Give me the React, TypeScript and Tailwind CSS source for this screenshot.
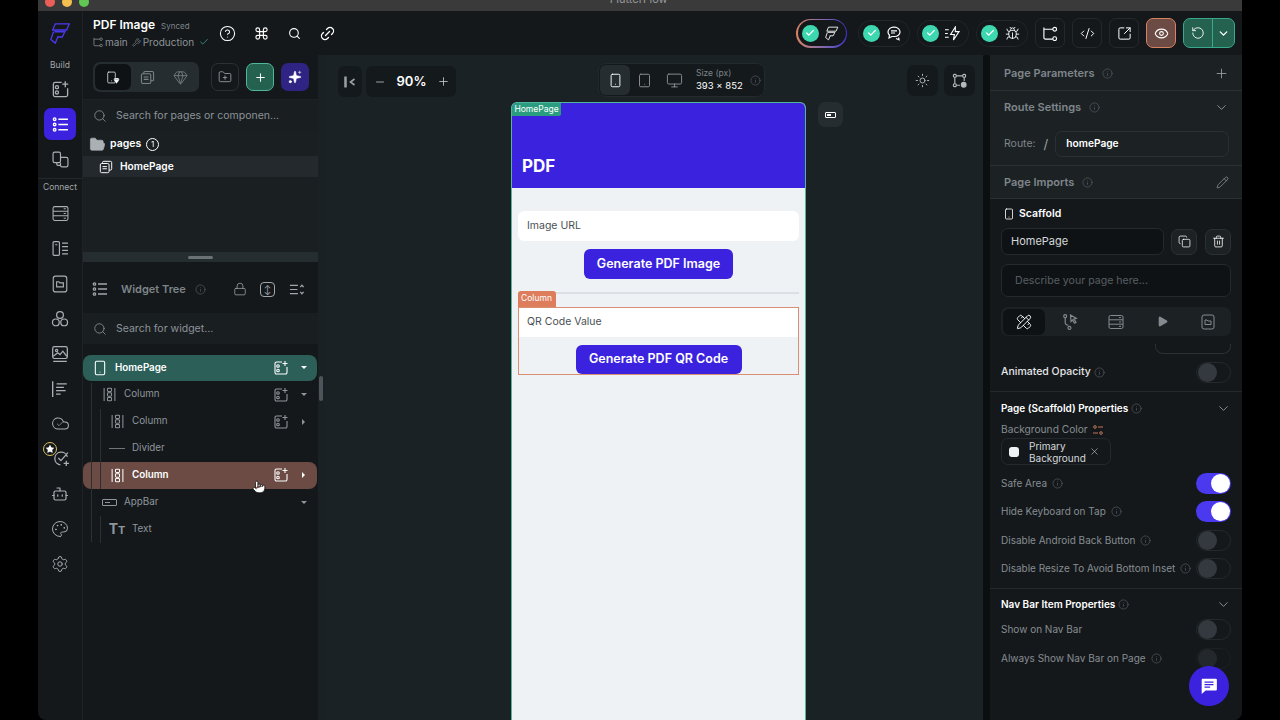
import {
  Bot,
  Bug,
  ChevronDown,
  CircleHelp,
  Cloud,
  CodeXml,
  Command,
  Copy,
  Eye,
  FolderOpen,
  FolderPlus,
  Gem,
  Info,
  Link2,
  Lock,
  Minus,
  Monitor,
  Palette,
  PencilRuler,
  Pencil,
  Play,
  Plus,
  Pointer,
  RotateCcw,
  Search,
  Settings,
  Smartphone,
  Sparkles,
  Star,
  Sun,
  Tablet,
  Trash2,
  Wrench,
  X,
  Check,
  SquareArrowOutUpRight,
} from "lucide-react";
import type { ReactNode } from "react";

const font = "font-['Inter',_sans-serif]";

function AddWidgetIcon({ className = "" }: { className?: string }) {
  return (
    <svg viewBox="0 0 16 16" fill="none" stroke="currentColor" strokeWidth="1.1" className={className}>
      <path d="M9 2H3.5A1.5 1.5 0 0 0 2 3.5v9A1.5 1.5 0 0 0 3.5 14h9a1.5 1.5 0 0 0 1.5-1.5V7" />
      <circle cx="5" cy="6" r="1.3" />
      <circle cx="5" cy="10.5" r="1.3" />
      <path d="M12 1v5M9.5 3.5h5" />
    </svg>
  );
}

function ColumnIcon({ className = "" }: { className?: string }) {
  return (
    <svg viewBox="0 0 14 16" fill="none" stroke="currentColor" strokeWidth="1.1" className={className}>
      <path d="M1.2 1v14M12.8 1v14" />
      <rect x="4.8" y="1.2" width="4.4" height="3.6" rx="1" />
      <rect x="4.8" y="6.2" width="4.4" height="3.6" rx="1" />
      <rect x="4.8" y="11.2" width="4.4" height="3.6" rx="1" />
    </svg>
  );
}

function ListDotsIcon({ className = "" }: { className?: string }) {
  return (
    <svg viewBox="0 0 16 16" fill="none" stroke="currentColor" strokeWidth="1.3" className={className}>
      <circle cx="2.5" cy="3" r="1.2" />
      <circle cx="2.5" cy="8" r="1.2" />
      <circle cx="2.5" cy="13" r="1.2" />
      <path d="M6 3h9M6 8h9M6 13h9" />
    </svg>
  );
}

function ServerIcon({ className = "" }: { className?: string }) {
  return (
    <svg viewBox="0 0 16 16" fill="none" stroke="currentColor" strokeWidth="1" className={className}>
      <rect x="1" y="1.5" width="14" height="13" rx="1.5" />
      <path d="M1 5.8h14M1 10.2h14M11 3.6h2M11 8h2M11 12.4h2" />
    </svg>
  );
}

function FolderDocIcon({ className = "" }: { className?: string }) {
  return (
    <svg viewBox="0 0 16 16" fill="none" stroke="currentColor" strokeWidth="1" className={className}>
      <rect x="2" y="1" width="12" height="14" rx="2" />
      <path d="M5 6h2l1 1h3v3.5H5z" />
    </svg>
  );
}

function PagesIcon({ className = "" }: { className?: string }) {
  return (
    <svg viewBox="0 0 16 16" fill="none" stroke="currentColor" strokeWidth="1.1" className={className}>
      <rect x="1.5" y="4" width="10" height="10.5" rx="1.6" />
      <path d="M4 4V3a1.5 1.5 0 0 1 1.5-1.5H13A1.5 1.5 0 0 1 14.5 3v7a1.5 1.5 0 0 1-1.5 1.5h-1.5M4 7.5h5M4 10h5" />
    </svg>
  );
}

function Logo({ className = "w-[21px] h-[25px]", color = "#4b39ef" }: { className?: string; color?: string }) {
  return (
    <svg viewBox="0 0 24 26" fill="none" stroke={color} strokeWidth="1.5" className={className}>
      <path d="M6 2h16l-3 7H3z" />
      <path d="M5 11h12l-3 6H8" />
      <path d="M4 11L1 20l5 4 3-7" />
    </svg>
  );
}

function FlowIcon({ className = "" }: { className?: string }) {
  return (
    <svg viewBox="0 0 16 16" fill="none" stroke="currentColor" strokeWidth="1.1" className={className}>
      <circle cx="3" cy="3" r="1.4" />
      <circle cx="7" cy="14" r="1.4" />
      <path d="M3 4.5v4a3 3 0 0 0 3 3M8 2l5.5 3-2.3.8 2 3-1.5.8-1.7-3L8.5 8z" />
    </svg>
  );
}

function ChatsIcon({ className = "" }: { className?: string }) {
  return (
    <svg viewBox="0 0 16 16" fill="none" stroke="currentColor" strokeWidth="1.2" className={className}>
      <path d="M2 7a5.5 4.8 0 0 1 5.5-4.8h1A5.5 4.8 0 0 1 14 7a5.5 4.5 0 0 1-5.5 4.5H6L3 13l.5-2.7A4.6 4.6 0 0 1 2 7z" />
      <path d="M5 5.8h6M5 8h4M10 13.5l3 1.2-.4-2.2" />
    </svg>
  );
}

function FastIcon({ className = "" }: { className?: string }) {
  return (
    <svg viewBox="0 0 18 16" fill="none" stroke="currentColor" strokeWidth="1.2" className={className}>
      <path d="M1 4h4M1 8h3M1 12h4M12 1L7 9h4l-1 6 6-9h-4z" />
    </svg>
  );
}

function BranchBoxIcon({ className = "" }: { className?: string }) {
  return (
    <svg viewBox="0 0 16 16" fill="none" stroke="currentColor" strokeWidth="1.2" className={className}>
      <path d="M1.5 1.5v11a1.500 1.500 0 0 0 1.500 1.500h8M1.500 3.500H11" />
      <circle cx="13" cy="3.500" r="2" />
      <circle cx="13" cy="13.500" r="2" />
    </svg>
  );
}

function InfoDot({ className = "" }: { className?: string }) {
  return <Info strokeWidth={1.3} className={`w-[11px] h-[11px] text-[#5f666b] shrink-0 ${className}`} />;
}

function RailIcon({ children }: { children: ReactNode }) {
  return <div className="h-[35px] w-full flex items-center justify-center text-[#aab0b4]">{children}</div>;
}

function CheckPill({ children, gradient }: { children: ReactNode; gradient?: boolean }) {
  return (
    <div
      className={
        gradient
          ? "h-[29px] w-[51px] rounded-full p-[1.5px] bg-gradient-to-r from-[#d9825f] to-[#4531d8]"
          : "h-[27px] w-[52px] rounded-full border border-[#23292c]"
      }
    >
      <div className="h-full w-full rounded-full bg-[#14181b] flex items-center justify-between pl-[4px] pr-[7px] text-white">
        <div className="w-[17px] h-[17px] rounded-full bg-[#3ed8b0] flex items-center justify-center">
          <Check strokeWidth={3} className="w-[10px] h-[10px] text-white" />
        </div>
        {children}
      </div>
    </div>
  );
}

function SquareBtn({ children }: { children: ReactNode }) {
  return (
    <div className="w-[30px] h-[30px] rounded-[7px] border border-[#23292c] flex items-center justify-center text-white">
      {children}
    </div>
  );
}

function TreeRow({
  label,
  icon,
  indent,
  tone,
  add = true,
  caret,
}: {
  label: string;
  icon: ReactNode;
  indent: string;
  tone?: "green" | "brown";
  add?: boolean;
  caret?: "down" | "right";
}) {
  const bg = tone === "green" ? "bg-[#2b5f58]" : tone === "brown" ? "bg-[#6b4b43]" : "";
  const text = tone ? "text-white font-semibold" : "text-[#8f969b]";
  return (
    <div className={`h-[26.83px] w-[234px] flex items-center rounded-[8px] ${bg} ${tone ? "text-white" : "text-[#8f969b]"}`}>
      <div className={`flex items-center ${indent}`}>
        <div className="w-[16px] h-[16px] flex items-center justify-center">{icon}</div>
      </div>
      <span className={`ml-[7px] text-[9.8px] ${text}`}>{label}</span>
      <div className="ml-auto flex items-center">
        {add && <AddWidgetIcon className="w-[16px] h-[16px]" />}
        <div className="w-[9px] h-[9px] ml-[10px] mr-[9px] flex items-center justify-center">
          {caret === "down" && <div className="border-x-[3px] border-x-transparent border-t-[3px] border-t-current" />}
          {caret === "right" && <div className="border-y-[3px] border-y-transparent border-l-[3px] border-l-current" />}
        </div>
      </div>
    </div>
  );
}

function Toggle({ on, dim }: { on?: boolean; dim?: boolean }) {
  if (on) {
    return (
      <div className="w-[35px] h-[21px] rounded-full bg-[#4b39ef] flex items-center justify-end pr-[1px]">
        <div className="w-[19px] h-[19px] rounded-full bg-white" />
      </div>
    );
  }
  return (
    <div className={`w-[35px] h-[21px] rounded-full border border-[#23292c] flex items-center pl-[1px] ${dim ? "opacity-50" : ""}`}>
      <div className="w-[19px] h-[19px] rounded-full bg-[#33393e]" />
    </div>
  );
}

function PropRow({ label, toggle, h = "h-[28.5px]" }: { label: string; toggle: ReactNode; h?: string }) {
  return (
    <div className={`${h} flex items-center justify-between pl-[11px] pr-[11px]`}>
      <div className="flex items-center gap-[5px] text-[10px] whitespace-nowrap text-[#878d92]">
        {label}
        <InfoDot />
      </div>
      {toggle}
    </div>
  );
}

export default function App() {
  return (
    <div className={`h-screen w-full bg-black flex justify-center overflow-hidden ${font}`}>
      <div className="relative w-[1204px] h-[720px] flex flex-col bg-[#14181b] overflow-hidden rounded-b-[8px]">
        {/* TITLE BAR */}
        <div className="h-[11px] shrink-0 bg-[#3a3a3a] flex items-start pl-[6.5px] gap-[7px] relative overflow-hidden">
          <div className="w-[10px] h-[10px] rounded-full bg-[#ec5f57] -mt-[3px]" />
          <div className="w-[10px] h-[10px] rounded-full bg-[#f4bf4f] -mt-[3px]" />
          <div className="w-[10px] h-[10px] rounded-full bg-[#62c654] -mt-[3px]" />
          <div className="flex-1 text-center text-[11px] leading-[11px] text-[#9a9a9a] -mt-[6px] -ml-[60px]">FlutterFlow</div>
        </div>

        {/* TOP BAR */}
        <div className="h-[44px] shrink-0 flex items-center">
          <div className="w-[45px] h-full flex items-center justify-center border-r border-[#1e2326]">
            <Logo />
          </div>
          <div className="ml-[10px] w-[126px]">
            <div className="flex items-baseline gap-[6px]">
              <span className="text-[12px] font-semibold text-white leading-[16px]">PDF Image</span>
              <span className="text-[8px] text-[#7f868b]">Synced</span>
            </div>
            <div className="flex items-center text-[10px] text-[#8d9398] leading-[14px] mt-[2px]">
              <BranchBoxIcon className="w-[10px] h-[10px] mr-[2px]" />
              main
              <Wrench strokeWidth={1.5} className="w-[9px] h-[9px] ml-[4px] mr-[2px]" />
              Production
              <Check strokeWidth={2} className="w-[10px] h-[10px] ml-[5px] text-[#3a9c85]" />
            </div>
          </div>
          <div className="flex items-center text-white">
            <CircleHelp strokeWidth={1.5} className="w-[17px] h-[17px]" />
            <Command strokeWidth={1.8} className="w-[15px] h-[15px] ml-[18px]" />
            <Search strokeWidth={2} className="w-[13px] h-[13px] ml-[19px]" />
            <Link2 strokeWidth={1.8} className="w-[17px] h-[17px] ml-[18px] -rotate-45" />
          </div>
          <div className="ml-auto mr-[7px] flex items-center">
            <CheckPill gradient>
              <Logo className="w-[14px] h-[15px]" color="white" />
            </CheckPill>
            <div className="w-[11px]" />
            <CheckPill>
              <ChatsIcon className="w-[16px] h-[16px]" />
            </CheckPill>
            <div className="w-[7px]" />
            <CheckPill>
              <FastIcon className="w-[17px] h-[15px]" />
            </CheckPill>
            <div className="w-[7px]" />
            <CheckPill>
              <Bug strokeWidth={1.4} className="w-[15px] h-[15px]" />
            </CheckPill>
            <div className="w-[7px]" />
            <SquareBtn>
              <BranchBoxIcon className="w-[16px] h-[15px]" />
            </SquareBtn>
            <div className="w-[7px]" />
            <SquareBtn>
              <CodeXml strokeWidth={1.6} className="w-[15px] h-[15px]" />
            </SquareBtn>
            <div className="w-[7px]" />
            <SquareBtn>
              <SquareArrowOutUpRight strokeWidth={1.6} className="w-[15px] h-[15px]" />
            </SquareBtn>
            <div className="w-[7px]" />
            <div className="w-[30px] h-[30px] rounded-[7px] border border-[#d9825f] bg-[#6b4b43] flex items-center justify-center text-white">
              <Eye strokeWidth={1.7} className="w-[15px] h-[15px]" />
            </div>
            <div className="w-[7px]" />
            <div className="w-[52px] h-[30px] rounded-[7px] border border-[#39a98e] bg-[#25614f] flex items-center text-white">
              <div className="w-[29px] h-full flex items-center justify-center border-r border-[#39a98e]">
                <RotateCcw strokeWidth={1.5} className="w-[14px] h-[14px]" />
              </div>
              <div className="flex-1 flex items-center justify-center">
                <ChevronDown strokeWidth={2.5} className="w-[13px] h-[13px]" />
              </div>
            </div>
          </div>
        </div>

        {/* BODY */}
        <div className="flex-1 flex min-h-0">
          {/* RAIL */}
          <div className="w-[45px] shrink-0 flex flex-col items-center border-r border-[#1e2326] relative">
            <div className="h-[20px] flex items-center text-[8.5px] text-[#a0a6aa]">Build</div>
            <div className="h-[28px] w-full flex items-center justify-center text-[#aab0b4]">
              <AddWidgetIcon className="w-[19px] h-[19px]" />
            </div>
            <div className="mt-[5px] w-[32px] h-[32px] rounded-[7px] bg-[#3b22df] flex items-center justify-center text-white">
              <ListDotsIcon className="w-[17px] h-[17px]" />
            </div>
            <div className="h-[38px] w-full flex items-center justify-center text-[#aab0b4]">
              <svg viewBox="0 0 16 16" fill="none" stroke="currentColor" strokeWidth="1.1" className="w-[17px] h-[17px]">
                <rect x="1" y="1" width="7" height="10" rx="1.5" />
                <path d="M8 6h5.5A1.5 1.5 0 0 1 15 7.5v6a1.5 1.5 0 0 1-1.5 1.5h-4A1.5 1.5 0 0 1 8 13.5V11M4.5 11v1.5a1 1 0 0 0 1 1H8" />
              </svg>
            </div>
            <div className="w-full border-t border-[#22282b] h-[18px] flex items-center justify-center text-[8.5px] text-[#a0a6aa]">
              Connect
            </div>
            <div className="w-full">
              <RailIcon>
                <ServerIcon className="w-[17px] h-[17px]" />
              </RailIcon>
              <RailIcon>
                <svg viewBox="0 0 16 16" fill="none" stroke="currentColor" strokeWidth="1.1" className="w-[17px] h-[17px]">
                  <rect x="1" y="1.5" width="6" height="13" rx="1" />
                  <path d="M9.5 3h5.5M9.5 6.3h5.5M9.5 9.7h5.5M9.5 13h5.5M3 4.5h2" />
                </svg>
              </RailIcon>
              <RailIcon>
                <FolderDocIcon className="w-[18px] h-[18px]" />
              </RailIcon>
              <RailIcon>
                <svg viewBox="0 0 16 16" fill="none" stroke="currentColor" strokeWidth="1.1" className="w-[18px] h-[18px]">
                  <circle cx="8" cy="4.5" r="3" />
                  <circle cx="4.3" cy="11" r="3" />
                  <circle cx="11.7" cy="11" r="3" />
                </svg>
              </RailIcon>
              <RailIcon>
                <svg viewBox="0 0 16 16" fill="none" stroke="currentColor" strokeWidth="1.1" className="w-[18px] h-[18px]">
                  <rect x="1.5" y="1.5" width="13" height="10.5" rx="1.5" />
                  <circle cx="5" cy="4.8" r="1" />
                  <path d="M2 10l4-3 2 1.5L10.5 5.500 14 10M2 14.5h12" />
                </svg>
              </RailIcon>
              <RailIcon>
                <svg viewBox="0 0 16 16" fill="none" stroke="currentColor" strokeWidth="1.2" className="w-[18px] h-[18px]">
                  <path d="M1.5 1v14M5 3.5h9M4.5 6.5h7M4.500 9.5h8.5M4.5 12.5h4" />
                </svg>
              </RailIcon>
              <RailIcon>
                <div className="relative flex items-center justify-center">
                  <Cloud strokeWidth={1.3} className="w-[19px] h-[19px]" />
                  <Check strokeWidth={2} className="absolute w-[8px] h-[8px] top-[6px]" />
                </div>
              </RailIcon>
              <RailIcon>
                <svg viewBox="0 0 16 16" fill="none" stroke="currentColor" strokeWidth="1.2" className="w-[17px] h-[17px] ml-[3px]">
                  <path d="M13.5 6.5A6 6 0 1 0 7 14M5 7.5l2.5 2.5L14 2.5M12.5 10v5M10 12.5h5" />
                </svg>
              </RailIcon>
              <RailIcon>
                <Bot strokeWidth={1.6} className="w-[18px] h-[18px]" />
              </RailIcon>
              <RailIcon>
                <Palette strokeWidth={1.3} className="w-[18px] h-[18px]" />
              </RailIcon>
              <RailIcon>
                <Settings strokeWidth={1.3} className="w-[18px] h-[18px]" />
              </RailIcon>
            </div>
            <div className="absolute left-[5px] top-[387px] w-[14px] h-[14px] rounded-full border border-[#d9c25f] bg-[#14181b] flex items-center justify-center">
              <Star fill="white" strokeWidth={0} className="w-[10px] h-[10px]" />
            </div>
          </div>

          {/* LEFT PANEL */}
          <div className="w-[235px] shrink-0 flex flex-col bg-[#14181b]">
            <div className="h-[45px] flex items-center pl-[10px] border-b border-[#1d2225]">
              <div className="w-[106px] h-[30px] rounded-[7px] bg-[#262d31] flex items-center p-[2px]">
                <div className="w-[36px] h-[26px] rounded-[6px] bg-[#0f1214] flex items-center justify-center text-white relative">
                  <Smartphone strokeWidth={1.3} className="w-[13px] h-[13px] -ml-[3px]" />
                  <Gem fill="white" strokeWidth={1} className="w-[7px] h-[7px] absolute right-[11px] bottom-[6px] text-[#0f1214]" />
                </div>
                <div className="w-[33px] flex justify-center text-[#7d8488]">
                  <PagesIcon className="w-[15px] h-[15px]" />
                </div>
                <div className="w-[33px] flex justify-center text-[#7d8488]">
                  <Gem strokeWidth={1.3} className="w-[15px] h-[15px]" />
                </div>
              </div>
              <div className="ml-[12px] w-[28px] h-[28px] rounded-[7px] border border-[#2a3034] flex items-center justify-center text-[#aab0b4]">
                <FolderPlus strokeWidth={1.3} className="w-[14px] h-[14px]" />
              </div>
              <div className="ml-[7px] w-[28px] h-[28px] rounded-[7px] border border-[#4fb79c] bg-[#25614f] flex items-center justify-center text-white">
                <Plus strokeWidth={2} className="w-[13px] h-[13px]" />
              </div>
              <div className="ml-[7px] w-[28px] h-[28px] rounded-[7px] bg-[#2f2483] flex items-center justify-center text-white">
                <Sparkles fill="white" strokeWidth={1} className="w-[14px] h-[14px]" />
              </div>
            </div>
            <div className="h-[31px] flex items-center pl-[10px] gap-[9px] bg-[#191e21] text-[#8d9398] text-[10.5px]">
              <Search strokeWidth={1.4} className="w-[14px] h-[14px]" />
              <span>Search for pages or componen...</span>
            </div>
            <div className="flex-none h-[121px] bg-[#1a1f22]">
              <div className="h-[24px] flex items-center pl-[6px] mt-[1px] text-white">
                <FolderOpen fill="#aab0b4" strokeWidth={1} className="w-[17px] h-[17px] text-[#aab0b4]" />
                <span className="ml-[4px] text-[10.5px] font-semibold">pages</span>
                <span className="ml-[5px] w-[13px] h-[13px] rounded-full border border-white flex items-center justify-center text-[8px]">1</span>
              </div>
              <div className="h-[21px] bg-[#23292d] flex items-center pl-[16px] text-white">
                <PagesIcon className="w-[14px] h-[14px]" />
                <span className="ml-[7px] text-[10.2px] font-semibold">HomePage</span>
              </div>
            </div>
            <div className="h-[10px] bg-[#262d31] flex items-center justify-center">
              <div className="w-[25px] h-[3px] rounded-full bg-[#6b7276]" />
            </div>
            <div className="h-[51px] flex items-center pl-[9px] pt-[3px] text-[#a0a6aa]">
              <ListDotsIcon className="w-[16px] h-[16px]" />
              <span className="ml-[13px] text-[11px] font-semibold text-[#7d8488]">Widget Tree</span>
              <InfoDot className="ml-[9px]" />
              <div className="ml-auto flex items-center gap-[13px] mr-[13px]">
                <Lock strokeWidth={1.3} className="w-[14px] h-[14px]" />
                <div className="w-[15px] h-[15px] rounded-[4px] border border-[#a0a6aa] flex items-center justify-center text-[9px] leading-none">↕</div>
                <svg viewBox="0 0 16 16" fill="none" stroke="currentColor" strokeWidth="1.3" className="w-[17px] h-[15px]">
                  <path d="M1 3.5h8.5M1 8h8M1 12.5h8.5M12 5.5l1.8-2 1.8 2M12 10.5l1.8 2 1.8-2" />
                </svg>
              </div>
            </div>
            <div className="h-[31px] flex items-center pl-[10px] gap-[9px] bg-[#191e21] text-[#8d9398] text-[10.5px]">
              <Search strokeWidth={1.4} className="w-[14px] h-[14px]" />
              <span>Search for widget...</span>
            </div>
            <div className="relative mt-[10.5px]">
              <TreeRow
                label="HomePage"
                tone="green"
                indent="pl-[9px]"
                caret="down"
                icon={<Smartphone strokeWidth={1.6} className="w-[16px] h-[16px]" />}
              />
              <TreeRow label="Column" indent="pl-[18px]" caret="down" icon={<ColumnIcon className="w-[13px] h-[15px]" />} />
              <TreeRow label="Column" indent="pl-[26px]" caret="right" icon={<ColumnIcon className="w-[13px] h-[15px]" />} />
              <TreeRow
                label="Divider"
                indent="pl-[26px]"
                add={false}
                icon={<div className="w-[16px] h-[1.5px] bg-[#6f767a]" />}
              />
              <TreeRow
                label="Column"
                tone="brown"
                indent="pl-[26px]"
                caret="right"
                icon={<ColumnIcon className="w-[13px] h-[15px]" />}
              />
              <TreeRow
                label="AppBar"
                indent="pl-[18px]"
                add={false}
                caret="down"
                icon={
                  <div className="w-[15px] h-[7px] border border-[#8f969b] rounded-[1px] flex items-center pl-[2px]">
                    <div className="w-[5px] h-[1px] bg-[#8f969b]" />
                  </div>
                }
              />
              <TreeRow
                label="Text"
                indent="pl-[26px]"
                add={false}
                icon={<span className="text-[14px] font-bold leading-none">T<span className="text-[11px]">T</span></span>}
              />
              <div className="absolute left-[8px] top-[28px] bottom-[0px] w-px bg-[#2a3034]" />
              <div className="absolute left-[17px] top-[54px] h-[80px] w-px bg-[#2a3034]" />
              <div className="absolute left-[17px] top-[161px] h-[27px] w-px bg-[#2a3034]" />
              <div className="absolute left-[169px] top-[124px]">
                <Pointer fill="white" strokeWidth={1.2} className="w-[14px] h-[16px] text-black" />
              </div>
            </div>
          </div>

          {/* LEFT SCROLLBAR */}
          <div className="w-[7px] shrink-0 bg-[#1a2124] pt-[321px] pl-[1px]">
            <div className="w-[4px] h-[25px] rounded-full bg-[#4e555a]" />
          </div>

          {/* CANVAS */}
          <div className="w-[658px] shrink-0 bg-[#1a2225] relative flex flex-col items-center overflow-hidden">
            <div className="absolute left-[13px] top-[11px] w-[24px] h-[31px] rounded-[6px] bg-[#14191c] flex items-center justify-center text-[#9aa0a4]">
              <svg viewBox="0 0 14 14" fill="none" stroke="currentColor" className="w-[14px] h-[14px]">
                <path d="M2.5 1.5v11" strokeWidth="2.5" />
                <path d="M11.5 4L7.5 7l4 3" strokeWidth="1.6" />
              </svg>
            </div>
            <div className="absolute left-[41px] top-[11px] w-[90px] h-[31px] rounded-[6px] bg-[#14191c] flex items-center justify-between pl-[8px] pr-[6px] text-white">
              <Minus strokeWidth={1.6} className="w-[12px] h-[12px] text-[#c0c4c7]" />
              <span className="text-[13px] font-semibold">90%</span>
              <Plus strokeWidth={1.6} className="w-[13px] h-[13px] text-[#c0c4c7]" />
            </div>
            <div className="absolute left-[273px] top-[8px] w-[167px] h-[34px] rounded-[8px] border border-[#23292c] bg-[#14191c] flex items-center pl-[1px] text-[#8d9398]">
              <div className="w-[30px] h-[30px] rounded-[6px] bg-[#262d31] flex items-center justify-center text-white">
                <Smartphone strokeWidth={1.5} className="w-[15px] h-[15px]" />
              </div>
              <Tablet strokeWidth={1.5} className="w-[15px] h-[15px] ml-[7px]" />
              <Monitor strokeWidth={1.3} className="w-[17px] h-[17px] ml-[14px]" />
              <div className="ml-[13px] flex flex-col">
                <span className="text-[8.5px] leading-[12px] text-[#7d8488]">Size (px)</span>
                <span className="text-[9.5px] leading-[14px] text-white">393 × 852</span>
              </div>
              <InfoDot className="ml-[7px]" />
            </div>
            <div className="absolute right-[45px] top-[10px] w-[31px] h-[31px] rounded-[7px] bg-[#14191c] flex items-center justify-center text-[#b5babd]">
              <Sun strokeWidth={1.5} className="w-[15px] h-[15px]" />
            </div>
            <div className="absolute right-[8px] top-[10px] w-[31px] h-[31px] rounded-[7px] bg-[#14191c] flex items-center justify-center text-[#b5babd]">
              <svg viewBox="0 0 16 16" fill="none" stroke="currentColor" strokeWidth="1.2" className="w-[15px] h-[15px]">
                <rect x="1.5" y="1.5" width="3" height="3" rx="1" />
                <rect x="11.5" y="1.5" width="3" height="3" rx="1" />
                <rect x="1.5" y="11.5" width="3" height="3" rx="1" />
                <path d="M4.5 3h7M3 4.5v7M4.5 13h4M13 4.5v4" />
                <circle cx="12.5" cy="12.5" r="2.5" fill="currentColor" />
              </svg>
            </div>
            <div className="absolute left-[493px] top-[47px] w-[25px] h-[25px] rounded-[7px] bg-[#262d31] flex items-center justify-center">
              <div className="w-[11px] h-[6px] rounded-[1px] border border-white flex items-center pl-[1px]">
                <div className="w-[4px] h-[2px] bg-white" />
              </div>
            </div>

            {/* DEVICE */}
            <div className="mt-[47px] ml-[9px] w-[295px] flex-1 rounded-t-[6px] border border-b-0 border-[#4fb79c] bg-[#eff2f5] relative">
              <div className="absolute left-0 top-0 h-[13px] w-[49px] bg-[#2a9d80] rounded-tl-[5px] rounded-br-[2px] flex items-center justify-center text-[8.5px] text-white">
                HomePage
              </div>
              <div className="h-[85px] bg-[#3b22df] rounded-t-[5px] flex items-end pl-[10px] pb-[10px]">
                <span className="text-[17px] leading-[24px] font-bold text-white">PDF</span>
              </div>
              <div className="px-[6px] pt-[23px] flex flex-col">
                <div className="h-[30px] rounded-[6px] bg-white flex items-center pl-[9px] text-[10.5px] text-[#4a4f54]">Image URL</div>
                <div className="mt-[8px] self-center w-[149px] h-[30px] pt-[1px] rounded-[6px] bg-[#3b22df] flex items-center justify-center text-[12.5px] font-semibold text-white">
                  Generate PDF Image
                </div>
                <div className="mt-[13px] h-[1.5px] bg-[#dce0e4]" />
                <div className="relative mt-[13px] h-[68px] border-[1.5px] border-[#d98f72] flex flex-col">
                  <div className="absolute -left-[1.5px] -top-[17px] h-[16px] w-[38px] rounded-t-[3px] bg-[#dd7d5b] flex items-center justify-center text-[8.5px] text-white">
                    Column
                  </div>
                  <div className="h-[29px] bg-white flex items-center pl-[8px] text-[10.5px] text-[#4a4f54]">QR Code Value</div>
                  <div className="mt-[8px] self-center w-[166px] h-[29px] pt-[1px] rounded-[6px] bg-[#3b22df] flex items-center justify-center text-[12.5px] font-semibold text-white">
                    Generate PDF QR Code
                  </div>
                </div>
              </div>
            </div>
          </div>

          {/* RIGHT SCROLLBAR */}
          <div className="w-[7px] shrink-0 bg-[#0c0f10] rounded-t-[3px]" />

          {/* RIGHT PANEL */}
          <div className="flex-1 min-w-0 flex flex-col relative">
            <div className="bg-[#1c2124]">
              <div className="h-[36px] pt-[1px] flex items-center justify-between pl-[14px] pr-[13px] border-b border-[#2a3034]">
                <div className="flex items-center gap-[8px] text-[11px] font-semibold text-[#7f868b]">
                  Page Parameters
                  <InfoDot />
                </div>
                <Plus strokeWidth={1.3} className="w-[15px] h-[15px] text-[#a0a6aa]" />
              </div>
              <div className="h-[33px] flex items-center justify-between pl-[14px] pr-[13px]">
                <div className="flex items-center gap-[8px] text-[11px] font-semibold text-[#7f868b]">
                  Route Settings
                  <InfoDot />
                </div>
                <ChevronDown strokeWidth={1.3} className="w-[15px] h-[15px] text-[#a0a6aa]" />
              </div>
              <div className="h-[42px] pt-[7px] flex items-start pl-[14px] pr-[13px] border-b border-[#2a3034]">
                <span className="text-[10.5px] leading-[26px] text-[#7f868b]">Route:</span>
                <span className="ml-[8px] text-[13px] leading-[26px] text-[#9aa0a4]">/</span>
                <div className="ml-[7px] flex-1 h-[26px] rounded-[7px] border border-[#2a3034] flex items-center pl-[10px] text-[10.2px] font-semibold text-white">
                  homePage
                </div>
              </div>
              <div className="h-[33px] flex items-center justify-between pl-[14px] pr-[13px] border-b border-[#2a3034]">
                <div className="flex items-center gap-[8px] text-[11px] font-semibold text-[#7f868b]">
                  Page Imports
                  <InfoDot />
                </div>
                <Pencil strokeWidth={1.2} className="w-[13px] h-[13px] text-[#a0a6aa]" />
              </div>
            </div>
            <div className="flex-1 bg-[#14181b] flex flex-col">
              <div className="h-[29px] pt-[1px] flex items-center pl-[13px] text-white">
                <Smartphone strokeWidth={1.6} className="w-[12px] h-[12px]" />
                <span className="ml-[4px] text-[10.5px] font-semibold">Scaffold</span>
              </div>
              <div className="flex items-center pl-[11px] pr-[11px]">
                <div className="w-[163px] h-[27px] rounded-[7px] border border-[#23292c] bg-[#0f1214] flex items-center pl-[9px] text-[11px] text-[#d5d8da]">
                  HomePage
                </div>
                <div className="ml-[7px] w-[26px] h-[26px] rounded-[7px] border border-[#2a3034] bg-[#1c2124] flex items-center justify-center text-white">
                  <Copy strokeWidth={1.4} className="w-[13px] h-[13px]" />
                </div>
                <div className="ml-[8px] w-[26px] h-[26px] rounded-[7px] border border-[#2a3034] bg-[#1c2124] flex items-center justify-center text-white">
                  <Trash2 strokeWidth={1.5} className="w-[13px] h-[13px]" />
                </div>
              </div>
              <div className="mx-[11px] mt-[9px] h-[33px] rounded-[7px] border border-[#23292c] bg-[#0f1214] flex items-center pl-[13px] text-[10.6px] text-[#575e63]">
                Describe your page here...
              </div>
              <div className="mx-[11px] mt-[10px] h-[29px] rounded-[7px] bg-[#1c2124] flex items-center pl-[2px] text-[#848b90]">
                <div className="w-[42px] h-[26px] rounded-[6px] bg-[#0f1214] flex items-center justify-center text-white">
                  <PencilRuler strokeWidth={1.4} className="w-[16px] h-[16px]" />
                </div>
                <div className="w-[50px] flex justify-center">
                  <FlowIcon className="w-[17px] h-[17px]" />
                </div>
                <div className="w-[42px] flex justify-center">
                  <ServerIcon className="w-[16px] h-[16px]" />
                </div>
                <div className="w-[50px] flex justify-center">
                  <Play fill="currentColor" strokeWidth={0} className="w-[13px] h-[13px]" />
                </div>
                <div className="w-[42px] flex justify-center">
                  <FolderDocIcon className="w-[16px] h-[16px]" />
                </div>
              </div>
              <div className="ml-[165px] mr-[11px] mt-[8px] h-[10px] rounded-b-[8px] border border-t-0 border-[#2a3034]" />
              <div className="h-[38px] pb-[1px] flex items-center justify-between pl-[11px] pr-[11px] border-b border-[#23292c]">
                <div className="flex items-center gap-[3px] text-[10.5px] font-medium text-[#e4e6e8]">
                  Animated Opacity
                  <InfoDot />
                </div>
                <Toggle />
              </div>
              <div className="h-[31px] pt-[1px] flex items-center justify-between pl-[11px] pr-[11px]">
                <div className="flex items-center gap-[3px] text-[10px] font-semibold text-white">
                  Page (Scaffold) Properties
                  <InfoDot />
                </div>
                <ChevronDown strokeWidth={1.3} className="w-[15px] h-[15px] text-[#a0a6aa]" />
              </div>
              <div className="h-[11px] mt-[1px] flex items-center pl-[11px] gap-[4px] text-[10.2px] text-[#878d92]">
                Background Color
                <svg viewBox="0 0 12 12" fill="none" stroke="#c0765a" strokeWidth="1" className="w-[12px] h-[12px]">
                  <circle cx="3" cy="3" r="1.3" />
                  <circle cx="9" cy="9" r="1.3" />
                  <path d="M6 3h5M1 9h5" />
                </svg>
              </div>
              <div className="ml-[11px] mt-[3px] w-[110px] h-[27px] rounded-[7px] border border-[#23292c] flex items-center pl-[7px]">
                <div className="w-[10px] h-[10px] rounded-[3px] bg-[#eff2f5]" />
                <span className="ml-[10px] w-[60px] text-[10px] leading-[12px] text-[#d5d8da]">Primary Background</span>
                <X strokeWidth={1.4} className="w-[11px] h-[11px] text-[#c0c4c7]" />
              </div>
              <div className="mt-[4px]">
                <PropRow label="Safe Area" toggle={<Toggle on />} />
                <PropRow label="Hide Keyboard on Tap" toggle={<Toggle on />} />
                <PropRow label="Disable Android Back Button" toggle={<Toggle />} />
                <PropRow label="Disable Resize To Avoid Bottom Inset" toggle={<Toggle />} />
              </div>
              <div className="mt-[5px] h-[32px] flex items-center justify-between pl-[11px] pr-[11px] border-t border-[#23292c]">
                <div className="flex items-center gap-[3px] text-[10px] font-semibold text-white">
                  Nav Bar Item Properties
                  <InfoDot />
                </div>
                <ChevronDown strokeWidth={1.3} className="w-[15px] h-[15px] text-[#a0a6aa]" />
              </div>
              <div className="h-[18px] flex items-center justify-between pl-[11px] pr-[11px] text-[10px] text-[#878d92]">
                Show on Nav Bar
                <Toggle />
              </div>
              <PropRow label="Always Show Nav Bar on Page" toggle={<Toggle dim />} h="h-[40px]" />
            </div>
            <div className="absolute right-[13px] bottom-[14px] w-[40px] h-[40px] rounded-full bg-[#3b22df] flex items-center justify-center">
              <svg viewBox="0 0 16 16" className="w-[18px] h-[18px]">
                <path d="M2 1.5h12a1 1 0 0 1 1 1V11a1 1 0 0 1-1 1H5l-3.500 3V2.500a1 1 0 0 1 .5-1z" fill="white" />
                <path d="M4 4.5h8M4 6.8h8M4 9.1h5" stroke="#3b22df" strokeWidth="1.1" />
              </svg>
            </div>
          </div>
        </div>
      </div>
    </div>
  );
}
